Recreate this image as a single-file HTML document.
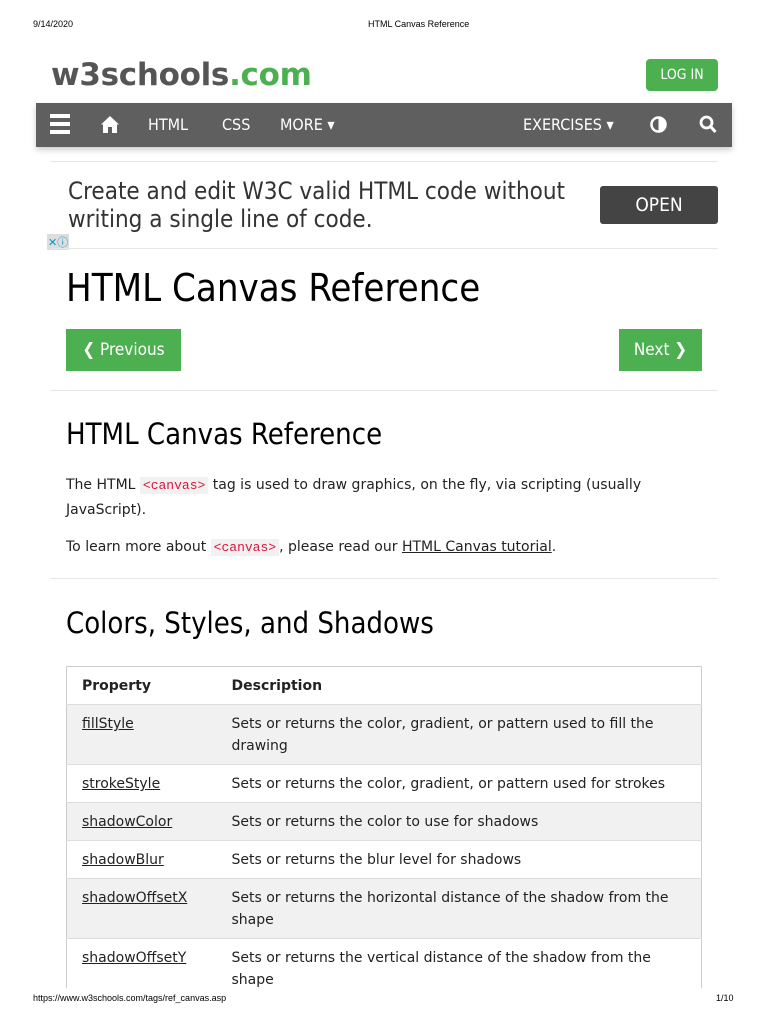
<!DOCTYPE html>
<html><head><meta charset="utf-8"><style>
*{margin:0;padding:0;box-sizing:border-box}
body{width:768px;height:1024px;background:#fff;position:relative;overflow:hidden;font-family:"Liberation Sans",sans-serif;color:#000}
.a{position:absolute}
.hdr{font-size:9px;color:#000}
.nav{left:36px;top:103px;width:696px;height:44px;background:#5f5f5f;color:#fff;font-size:16px;font-family:"DejaVu Sans Condensed","DejaVu Sans",sans-serif;box-shadow:0 3px 6px rgba(0,0,0,.2)}
.nav span{position:absolute;top:12px}
.hr{height:1px;background:#e6e6e6}
.btn{background:#4caf50;color:#fff;font-size:17px;text-align:center;line-height:42px;font-family:"DejaVu Sans Condensed","DejaVu Sans",sans-serif}
p.t{font-size:14px;color:#222;line-height:24px;font-family:"DejaVu Sans",sans-serif}
code{font-family:"Liberation Mono",monospace;color:#dc143c;background:#f1f1f1;font-size:13px;padding:1px 3px}
table{position:absolute;left:66px;top:666px;width:636px;border-collapse:collapse;border:1px solid #ccc;font-size:14px;color:#222;font-family:"DejaVu Sans",sans-serif}
td,th{text-align:left;vertical-align:top;padding:8px 15px 7px;line-height:22px}
th{font-weight:bold}
td:first-child,th:first-child{width:150px}
tr:nth-child(even){background:#f1f1f1}
tr{border-bottom:1px solid #ddd}
td a{color:#222;text-decoration:underline}
</style></head><body>
<div class="a hdr" style="left:33px;top:19px">9/14/2020</div>
<div class="a hdr" style="left:368px;top:19px">HTML Canvas Reference</div>
<div class="a" style="left:51px;top:57px;font-size:31px;font-weight:bold;color:#555;font-family:'DejaVu Sans',sans-serif;letter-spacing:-0.3px">w3schools<span style="color:#4caf50">.com</span></div>
<div class="a btn" style="left:646px;top:59px;width:72px;height:32px;line-height:32px;font-size:14px;border-radius:4px">LOG IN</div>
<div class="a nav">
<span style="left:14px;top:10px;width:20px"><i style="display:block;height:4px;background:#fff;margin:1px 0 4px"></i><i style="display:block;height:4px;background:#fff;margin-bottom:4px"></i><i style="display:block;height:4px;background:#fff"></i></span>
<svg style="position:absolute;left:64px;top:12px" width="20" height="19" viewBox="0 0 20 19"><path d="M10 1 L1 9.5 L3 9.5 L3 18 L8 18 L8 12 L12 12 L12 18 L17 18 L17 9.5 L19 9.5 Z" fill="#fff"/></svg>
<span style="left:112px">HTML</span><span style="left:186px">CSS</span><span style="left:244px">MORE ▾</span>
<span style="left:487px">EXERCISES ▾</span>
<svg style="position:absolute;left:614px;top:13px" width="17" height="17" viewBox="0 0 17 17"><circle cx="8.5" cy="8.5" r="7" fill="none" stroke="#fff" stroke-width="2.5"/><path d="M8.5 1.5 A7 7 0 0 1 8.5 15.5 Z" fill="#fff"/></svg>
<svg style="position:absolute;left:663px;top:12px" width="18" height="19" viewBox="0 0 18 19"><circle cx="7.5" cy="7.5" r="5.5" fill="none" stroke="#fff" stroke-width="2.8"/><path d="M11.5 11.5 L16.5 17" stroke="#fff" stroke-width="3"/></svg>
</div>
<div class="a hr" style="left:50px;top:161px;width:668px"></div>
<div class="a" style="left:68px;top:177px;font-size:24px;color:#333;line-height:28px;font-family:'DejaVu Sans Condensed','DejaVu Sans',sans-serif">Create and edit W3C valid HTML code without<br>writing a single line of code.</div>
<div class="a" style="left:600px;top:186px;width:118px;height:38px;background:#444;color:#fff;border-radius:3px;text-align:center;line-height:38px;font-size:19px;font-family:'DejaVu Sans Condensed',sans-serif">OPEN</div>
<div class="a" style="left:47px;top:234px;font-size:11px;color:#09c;background:#ddd;padding:0 1px">✕ⓘ</div>
<div class="a hr" style="left:50px;top:248px;width:668px"></div>
<div class="a" style="left:66px;top:266px;font-size:38px;color:#000;font-family:'DejaVu Sans Condensed','DejaVu Sans',sans-serif">HTML Canvas Reference</div>
<div class="a btn" style="left:66px;top:329px;width:115px;height:42px">❮ Previous</div>
<div class="a btn" style="left:619px;top:329px;width:83px;height:42px">Next ❯</div>
<div class="a hr" style="left:50px;top:390px;width:668px"></div>
<div class="a" style="left:66px;top:417px;font-size:29px;font-family:'DejaVu Sans Condensed','DejaVu Sans',sans-serif">HTML Canvas Reference</div>
<p class="a t" style="left:66px;top:473px;width:620px">The HTML <code>&lt;canvas&gt;</code> tag is used to draw graphics, on the fly, via scripting (usually JavaScript).</p>
<p class="a t" style="left:66px;top:535px">To learn more about <code>&lt;canvas&gt;</code>, please read our <u>HTML Canvas tutorial</u>.</p>
<div class="a hr" style="left:50px;top:578px;width:668px"></div>
<div class="a" style="left:66px;top:606px;font-size:29px;font-family:'DejaVu Sans Condensed','DejaVu Sans',sans-serif">Colors, Styles, and Shadows</div>
<table>
<tr><th>Property</th><th>Description</th></tr>
<tr><td><a>fillStyle</a></td><td>Sets or returns the color, gradient, or pattern used to fill the drawing</td></tr>
<tr><td><a>strokeStyle</a></td><td>Sets or returns the color, gradient, or pattern used for strokes</td></tr>
<tr><td><a>shadowColor</a></td><td>Sets or returns the color to use for shadows</td></tr>
<tr><td><a>shadowBlur</a></td><td>Sets or returns the blur level for shadows</td></tr>
<tr><td><a>shadowOffsetX</a></td><td>Sets or returns the horizontal distance of the shadow from the shape</td></tr>
<tr><td><a>shadowOffsetY</a></td><td>Sets or returns the vertical distance of the shadow from the shape</td></tr>
</table>
<div class="a" style="left:0;top:988px;width:768px;height:36px;background:#fff"></div>
<div class="a hdr" style="left:33px;top:993px">https://www.w3schools.com/tags/ref_canvas.asp</div>
<div class="a hdr" style="left:716px;top:993px">1/10</div>
</body></html>
